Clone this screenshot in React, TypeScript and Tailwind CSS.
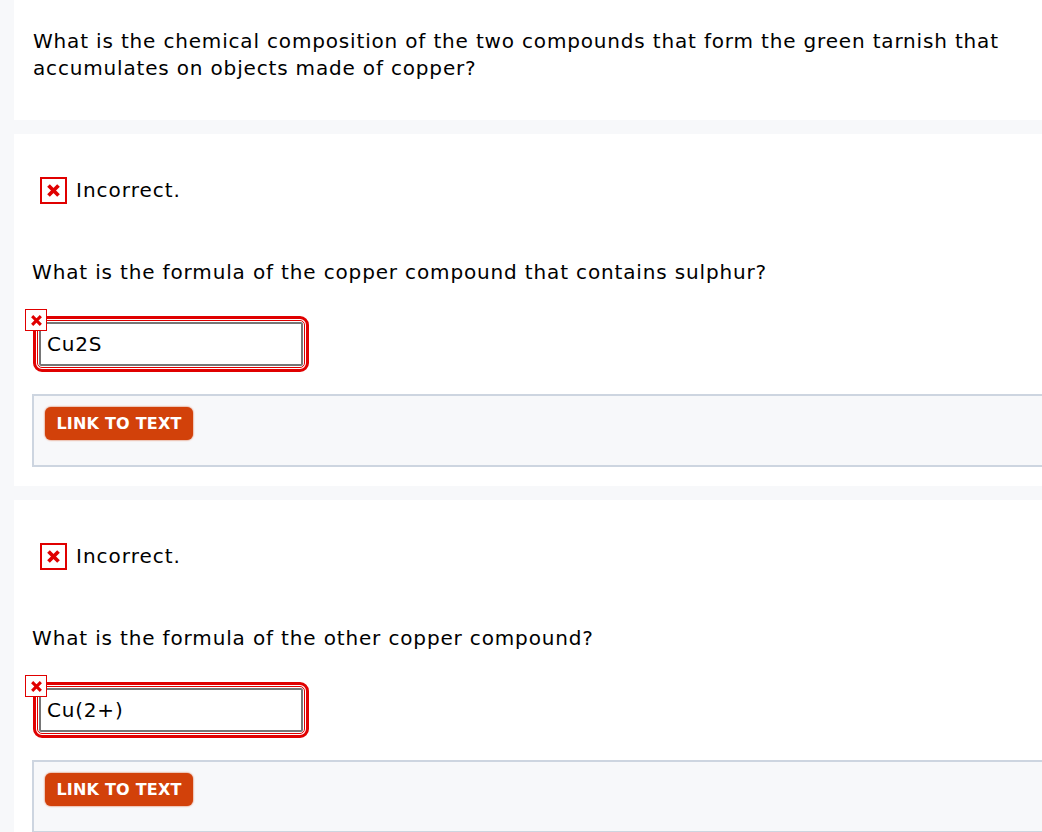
import React from "react";

const font = { fontFamily: '"DejaVu Sans", Verdana, sans-serif' };

function XMark({ size, weight = 3 }: { size: number; weight?: number }) {
  return (
    <svg width={size} height={size} viewBox="0 0 12 12">
      <path d="M2 2 L10 10 M10 2 L2 10" stroke="#e00000" strokeWidth={weight} />
    </svg>
  );
}

function Incorrect() {
  return (
    <div className="flex items-center gap-[9px]">
      <div className="w-[27px] h-[27px] border-2 border-[#e00000] bg-white flex items-center justify-center">
        <XMark size={15} />
      </div>
      <span className="text-[20px] tracking-[1px] text-black">Incorrect.</span>
    </div>
  );
}

function Answer({ value }: { value: string }) {
  return (
    <div className="relative w-fit ml-[1px]">
      <div className="absolute -left-[8px] -top-[7px] w-[22px] h-[22px] border border-[#e00000] bg-white flex items-center justify-center z-10">
        <XMark size={13} weight={2.8} />
      </div>
      <div className="border-[3px] border-[#e00000] rounded-[9px] p-[1px] bg-white">
        <div className="border border-[#e00000] rounded-[5px] p-[1px]">
          <input
            readOnly
            value={value}
            className="block w-[264px] h-[44px] border-2 border-[#767676] rounded-[2px] px-[6px] text-[20px] tracking-[0.8px] text-black bg-white outline-none"
            style={font}
          />
        </div>
      </div>
    </div>
  );
}

function LinkPanel() {
  return (
    <div className="mt-[22px] border-2 border-r-0 border-[#cdd5e0] bg-[#f7f8fa] pl-[11px] pt-[11px] h-[73px]">
      <button
        className="bg-[#d2410a] text-white font-bold text-[16px] rounded-[6px] w-[148px] h-[33px] shadow-[0_0_2px_#d2410a] tracking-[0.2px]"
        style={font}
      >
        LINK TO TEXT
      </button>
    </div>
  );
}

function Part({ question, value }: { question: string; value: string }) {
  return (
    <div className="bg-white pl-[18px] pt-[41px] pb-[19px]">
      <div className="pl-[8px]">
        <Incorrect />
      </div>
      <p className="mt-[54px] text-[20px] leading-[27px] tracking-[0.85px] text-black">{question}</p>
      <div className="mt-[30px]">
        <Answer value={value} />
      </div>
      <LinkPanel />
    </div>
  );
}

export default function App() {
  return (
    <div className="min-h-screen bg-[#f7f8fa] pl-[14px] flex flex-col gap-[14px] overflow-hidden" style={font}>
      <div className="bg-white pl-[19px] pt-[28px] h-[120px]">
        <p className="text-[20px] leading-[27px] tracking-[0.83px] text-black whitespace-nowrap">
          What is the chemical composition of the two compounds that form the green tarnish that
          <br />
          accumulates on objects made of copper?
        </p>
      </div>
      <Part question="What is the formula of the copper compound that contains sulphur?" value="Cu2S" />
      <Part question="What is the formula of the other copper compound?" value="Cu(2+)" />
    </div>
  );
}
